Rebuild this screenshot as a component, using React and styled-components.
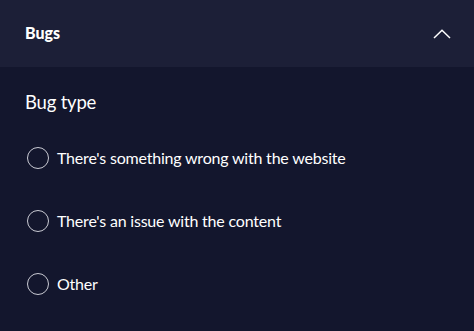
import React from "react";
import styled, { createGlobalStyle } from "styled-components";

const Global = createGlobalStyle`
  html, body { margin: 0; padding: 0; background: #13162d; }
  body { font-family: "Lato", "Noto Sans", sans-serif; color: #fff; }
`;

const Panel = styled.div`
  width: 474px;
  height: 331px;
  background: #13162d;
  display: flex;
  flex-direction: column;
`;

const Header = styled.div`
  height: 67px;
  box-sizing: border-box;
  background: #1c1f37;
  display: flex;
  align-items: center;
  justify-content: space-between;
  padding: 0 23px 0 25px;
`;

const Title = styled.h2`
  margin: 0;
  font-size: 16px;
  font-weight: 900;
  color: #fff;
  line-height: 1;
  margin-top: -1px;
`;

const Body = styled.div`
  padding: 23px 25px 0 25px;
  display: flex;
  flex-direction: column;
`;

const Legend = styled.div`
  font-size: 18.5px;
  font-weight: 400;
  line-height: 24px;
  letter-spacing: -0.2px;
  margin-bottom: 33px;
`;

const Options = styled.div`
  display: flex;
  flex-direction: column;
  gap: 41px;
`;

const Option = styled.label`
  display: flex;
  align-items: center;
  gap: 8px;
  font-size: 16px;
  line-height: 22px;
  letter-spacing: -0.2px;
  color: #fff;
  padding-left: 2px;
`;

const Circle = styled.span`
  width: 22px;
  height: 22px;
  box-sizing: border-box;
  border-radius: 50%;
  border: 1.5px solid #c9cad3;
  flex: none;
`;

const Chevron = () => (
  <svg width="18" height="10" viewBox="0 0 18 10" fill="none">
    <path d="M1 9 L9 1.2 L17 9" stroke="#fff" strokeWidth="1.5" />
  </svg>
);

const options = [
  "There's something wrong with the website",
  "There's an issue with the content",
  "Other",
];

export default function App() {
  return (
    <>
      <Global />
      <Panel>
        <Header>
          <Title>Bugs</Title>
          <Chevron />
        </Header>
        <Body>
          <Legend>Bug type</Legend>
          <Options>
            {options.map((o) => (
              <Option key={o}>
                <Circle />
                {o}
              </Option>
            ))}
          </Options>
        </Body>
      </Panel>
    </>
  );
}
